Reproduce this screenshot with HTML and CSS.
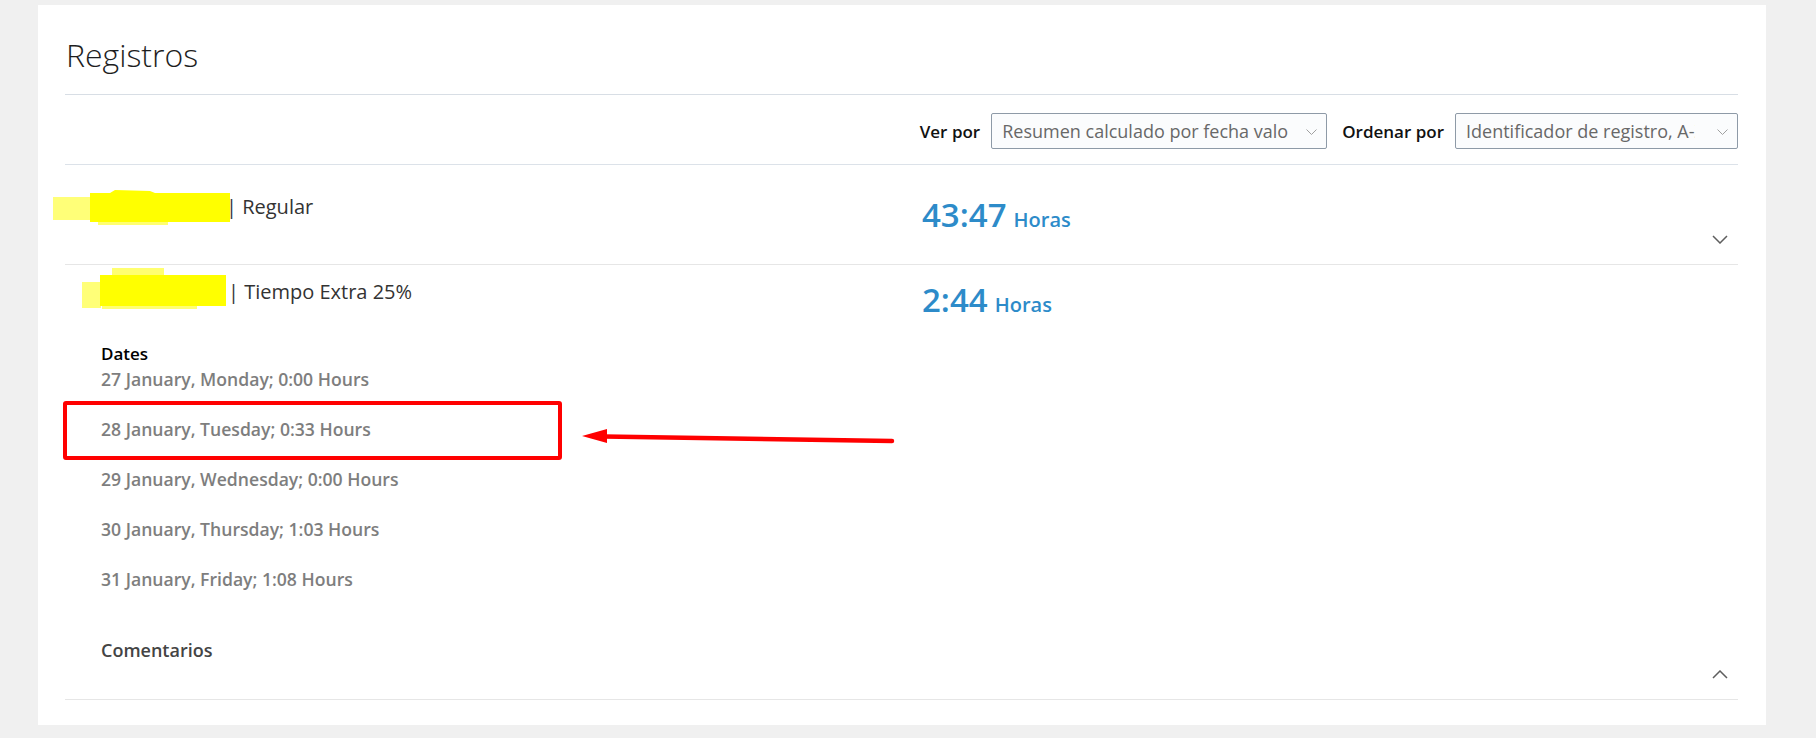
FILE: index.html
```html
<html>

<head>
	<link rel="stylesheet" href="styles.css">
</head>

<body>
	<div class="card">
		<h1 class="title">Registros</h1>

		<div class="toolbar">
			<span class="fieldLabel">Ver por</span>
			<div class="select selectView">
				<span class="selectText">Resumen calculado por fecha valor</span>
				<svg class="caret" width="11" height="6" viewBox="0 0 11 6"><path d="M0.5 0.5 L5.5 5.5 L10.5 0.5" /></svg>
			</div>
			<span class="fieldLabel gapLeft">Ordenar por</span>
			<div class="select selectSort">
				<span class="selectText">Identificador de registro, A-Z</span>
				<svg class="caret" width="11" height="6" viewBox="0 0 11 6"><path d="M0.5 0.5 L5.5 5.5 L10.5 0.5" /></svg>
			</div>
		</div>

		<div class="entry entryFirst">
			<div class="entryHead">
				<div class="entryLabel">
					<svg class="redact redactA" width="173" height="28" viewBox="0 0 173 28">
						<rect x="0" y="4" width="38" height="23" fill="#ffff78" />
						<path d="M37 0 L57 0 L62 -3 L97 -2 L102 0 L177 0 L177 29 L37 29 Z" fill="#ffff00" />
						<rect x="45" y="29" width="70" height="3" fill="#ffff70" />
					</svg>
					<span class="entryType">| Regular</span>
				</div>
				<div class="entryHours"><span class="hoursValue">43:47</span><span class="hoursUnit">Horas</span></div>
			</div>
			<div class="entryFoot">
				<svg class="chevron" width="16" height="9" viewBox="0 0 16 9"><path d="M1 1 L8 8 L15 1" /></svg>
			</div>
		</div>

		<div class="entry entryOpen">
			<div class="entryHead">
				<div class="entryLabel">
					<svg class="redact redactB" width="146" height="28" viewBox="0 0 146 28">
						<rect x="30" y="-10" width="52" height="8" fill="#ffff70" />
						<rect x="0" y="4" width="19" height="26" fill="#ffff78" />
						<path d="M18 -3 L144 -3 L144 28 L18 28 Z" fill="#ffff00" />
						<rect x="20" y="28" width="95" height="3" fill="#ffff70" />
					</svg>
					<span class="entryType">| Tiempo Extra 25%</span>
				</div>
				<div class="entryHours"><span class="hoursValue">2:44</span><span class="hoursUnit">Horas</span></div>
			</div>

			<div class="details">
				<div class="detailsTitle">Dates</div>
				<ul class="dateList">
					<li>27 January, Monday; 0:00 Hours</li>
					<li class="marked">
						28 January, Tuesday; 0:33 Hours
						<span class="markBox"></span>
						<svg class="markArrow" width="314" height="20" viewBox="0 0 314 20">
							<path d="M0 9 L25 2 L25 16 Z" fill="#ff0000" />
							<path d="M22 9.5 L310 14" stroke="#ff0000" stroke-width="4.5" stroke-linecap="round" />
						</svg>
					</li>
					<li>29 January, Wednesday; 0:00 Hours</li>
					<li>30 January, Thursday; 1:03 Hours</li>
					<li>31 January, Friday; 1:08 Hours</li>
				</ul>
				<div class="commentsTitle">Comentarios</div>
			</div>

			<div class="entryFoot">
				<svg class="chevron" width="16" height="9" viewBox="0 0 16 9"><path d="M1 8 L8 1 L15 8" /></svg>
			</div>
		</div>
	</div>
</body>

</html>
```

FILE: styles.css
```css
body {
	margin: 0;

	background-color: #f0f0f0;

	font-family: "Open Sans", "Noto Sans", sans-serif;
	color: #333;
}

.card {
	width: 1728px;
	margin: 5px 0 12px 38px;
	padding: 0 28px 25px 27px;
	box-sizing: border-box;

	background-color: white;
}

.title {
	height: 46px;
	margin: 0;
	padding: 27px 0 16px 1px;

	border-bottom: 1px solid #d8dee5;

	font-size: 32px;
	font-weight: 300;
	line-height: 46px;
	color: #1e1e1e;
}

.toolbar {
	display: flex;
	justify-content: flex-end;
	align-items: center;

	height: 36px;
	padding: 18px 0 15px;

	border-bottom: 1px solid #dce2e9;
}

.fieldLabel {
	margin-right: 11px;

	font-size: 17px;
	font-weight: 600;
	color: #111;
}

.gapLeft {
	margin-left: 15px;
}

.select {
	display: flex;
	align-items: center;

	height: 36px;
	padding: 0 9px 0 10px;
	box-sizing: border-box;

	border: 1px solid #8e9aa7;
	border-radius: 2px;
	background-color: #fbfcfd;
}

.selectView {
	width: 336px;
}

.selectSort {
	width: 283px;
}

.selectText {
	overflow: hidden;

	white-space: nowrap;
	font-size: 18px;
	color: #686868;
}

.selectView .selectText {
	width: 287px;
}

.selectSort .selectText {
	width: 229px;
}

.caret {
	flex: none;
	margin: 1px 0 0 auto;
}

.caret path {
	fill: none;
	stroke: #a0a0a0;
	stroke-width: 1;
}

.entry {
	border-bottom: 1px solid #e6e6e6;
}

.entryFirst {
	padding-top: 28px;
}

.entryOpen {
	padding-top: 13px;
}

.entryHead {
	display: grid;
	grid-template-columns: 857px 1fr;
	align-items: start;

	height: 42px;
}

.entryLabel {
	display: flex;
	align-items: center;

	height: 28px;
}

.redact {
	flex: none;
	overflow: visible;
}

.redactA {
	margin-left: -12px;
}

.redactB {
	margin-left: 17px;
}

.entryType {
	font-size: 20px;
	line-height: 28px;
	white-space: nowrap;
	color: #333;
}

.entryHours {
	margin-top: 3px;

	font-size: 33px;
	font-weight: 600;
	line-height: 38px;
	color: #2d8bc9;
}

.hoursUnit {
	margin-left: 7px;

	font-size: 20px;
	line-height: 1;
}

.entryFoot {
	display: flex;
	justify-content: flex-end;

	height: 9px;
	padding: 0 10px 20px 0;
}

.entryOpen .entryFoot {
	margin-top: 7px;
}

.chevron {
	display: block;
}

.chevron path {
	fill: none;
	stroke: #5e5e5e;
	stroke-width: 1.5;
}

.details {
	margin-top: 22px;
	padding-left: 36px;
}

.detailsTitle {
	font-size: 17px;
	font-weight: 600;
	line-height: 24px;
	color: #000;
}

.dateList {
	margin: 0;
	padding: 0;

	list-style: none;
}

.dateList li {
	margin-top: 28px;

	font-size: 17.6px;
	font-weight: 600;
	line-height: 22px;
	color: #7e7e7e;
}

.dateList li:first-child {
	margin-top: 2px;
}

.marked {
	position: relative;
}

.markBox {
	position: absolute;
	left: -38px;
	top: -17px;

	width: 499px;
	height: 59px;
	box-sizing: border-box;

	border: 4px solid #ff0000;
	border-radius: 3px;
}

.markArrow {
	position: absolute;
	left: 481px;
	top: 9px;
}

.commentsTitle {
	margin-top: 47px;

	font-size: 18px;
	font-weight: 600;
	line-height: 26px;
	color: #444;
}
```
